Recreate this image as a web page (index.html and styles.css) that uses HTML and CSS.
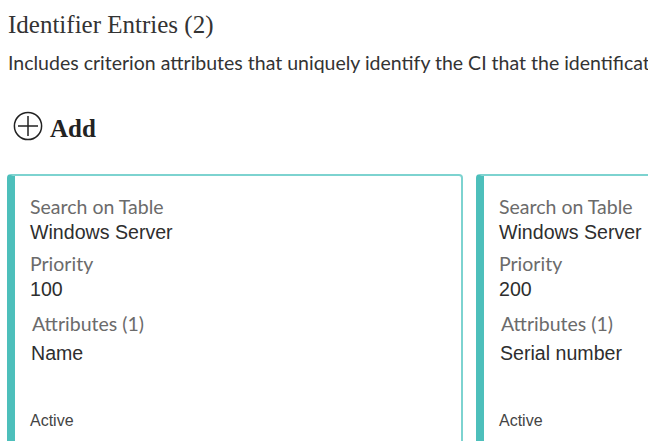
FILE: index.html
```html
<!DOCTYPE html>
<html>
<head>
<meta charset="utf-8">
<link rel="stylesheet" href="styles.css">
</head>
<body>
<div class="page">
  <h2 class="title">Identifier Entries (2)</h2>
  <p class="desc">Includes criterion attributes that uniquely identify the CI that the identification rule applies to.</p>
  <div class="add">
    <svg class="add-icon" width="30" height="30" viewBox="0 0 30 30"><circle cx="15" cy="15" r="13.6" fill="none" stroke="#222" stroke-width="1.5"/><path d="M15 5V25M5 15H25" stroke="#222" stroke-width="1.5"/></svg>
    <span class="add-label">Add</span>
  </div>
  <div class="cards">
    <div class="card">
      <div class="label">Search on Table</div>
      <div class="value first">Windows Server</div>
      <div class="label prio">Priority</div>
      <div class="value first">100</div>
      <div class="label attr">Attributes (1)</div>
      <div class="value attrval">Name</div>
      <div class="status">Active</div>
    </div>
    <div class="card">
      <div class="label">Search on Table</div>
      <div class="value first">Windows Server</div>
      <div class="label prio">Priority</div>
      <div class="value first">200</div>
      <div class="label attr">Attributes (1)</div>
      <div class="value attrval">Serial number</div>
      <div class="status">Active</div>
    </div>
  </div>
</div>
</body>
</html>
```
FILE: styles.css
```css
html, body {
  margin: 0;
  padding: 0;
  background: #fff;
}
.page {
  box-sizing: border-box;
  width: 648px;
  height: 441px;
  overflow: hidden;
  padding: 10px 0 0 8px;
}
.title {
  margin: 0;
  font-family: "Liberation Serif", serif;
  font-weight: normal;
  font-size: 25px;
  line-height: 30px;
  color: #333;
  white-space: nowrap;
}
.desc {
  margin: 10px 0 0 0;
  font-family: Lato, sans-serif;
  font-size: 19.5px;
  line-height: 26px;
  color: #333;
  white-space: nowrap;
}
.add {
  display: flex;
  align-items: flex-start;
  gap: 7.5px;
  margin-top: 35px;
  margin-left: 4.5px;
  height: 30px;
}
.add-icon {
  flex-shrink: 0;
}
.add-label {
  margin-top: 3px;
  font-family: "Liberation Serif", serif;
  font-weight: bold;
  font-size: 25px;
  line-height: 30px;
  color: #222;
}
.cards {
  display: flex;
  gap: 13px;
  margin-top: 33px;
  margin-left: -1px;
}
.card {
  flex-shrink: 0;
  width: 431px;
  height: 300px;
  border: 2px solid #7dd3d0;
  border-left: 8px solid #4dbfbb;
  border-radius: 4px 4px 0 0;
  padding: 19px 0 0 15px;
}
.label {
  font-family: Lato, sans-serif;
  font-size: 19.5px;
  line-height: 24px;
  color: #6b6b6b;
  white-space: nowrap;
}
.value {
  font-family: "Liberation Sans", Arial, sans-serif;
  font-size: 19.6px;
  line-height: 24px;
  color: #2e2e2e;
  white-space: nowrap;
}
.first {
  margin-top: 1px;
}
.prio {
  margin-top: 8px;
}
.attr {
  margin-top: 11px;
  margin-left: 2px;
}
.attrval {
  margin-top: 4.5px;
  margin-left: 1px;
}
.status {
  margin-top: 46.5px;
  font-family: "Liberation Sans", Arial, sans-serif;
  font-size: 16px;
  line-height: 20px;
  color: #444;
}
```
